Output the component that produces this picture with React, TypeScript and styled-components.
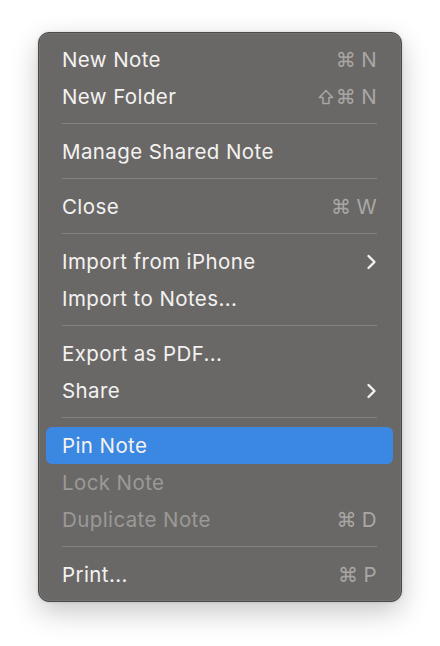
import React from "react";
import styled, { createGlobalStyle } from "styled-components";

const Global = createGlobalStyle`
  html, body { margin: 0; padding: 0; background: #ffffff; }
  body { font-family: Inter, "Noto Sans", "DejaVu Sans", sans-serif; }
`;

const Page = styled.div`
  padding: 32px 0 0 38px;
  width: 440px;
  height: 646px;
  box-sizing: border-box;
`;

const Menu = styled.div`
  width: 364px;
  box-sizing: border-box;
  background: #6a6866;
  border: 1px solid #4c4a48;
  border-radius: 11px;
  padding: 8px 8px 8px 7px;
  box-shadow: 0 10px 28px rgba(0, 0, 0, 0.22), 0 0 3px rgba(0, 0, 0, 0.15),
    inset 0 0 0 1px rgba(255, 255, 255, 0.08);
  display: flex;
  flex-direction: column;
`;

const Row = styled.div<{ $active?: boolean; $disabled?: boolean }>`
  height: 37px;
  display: flex;
  align-items: center;
  justify-content: space-between;
  padding: 0 16px;
  border-radius: 6px;
  background: ${(p) => (p.$active ? "#3b88e3" : "transparent")};
  color: ${(p) => (p.$disabled ? "#9b9997" : "#f3f2f1")};
  font-size: 20.5px;
  letter-spacing: 0.4px;
`;

const Shortcut = styled.span`
  color: #a9a7a5;
  font-size: 20.5px;
  display: flex;
  align-items: center;
  gap: 5px;
`;

const Keys = styled.span`
  display: flex;
  align-items: center;
  gap: 2px;
`;

const Glyph = styled.span`
  font-family: "DejaVu Sans", sans-serif;
  font-size: 20px;
  line-height: 1;
`;

const Separator = styled.div`
  height: 1px;
  background: #858381;
  margin: 8px 16px 9px 16px;
`;

const Chevron = () => (
  <svg width="11" height="16" viewBox="0 0 11 16">
    <path
      d="M2.5 2 L8.5 8 L2.5 14"
      fill="none"
      stroke="#f3f2f1"
      strokeWidth="2.4"
      strokeLinecap="round"
      strokeLinejoin="round"
    />
  </svg>
);

const ShiftIcon = () => (
  <svg width="16" height="16" viewBox="0 0 16 16">
    <path
      d="M8 1.6 L14.6 8.4 H11 V14.4 H5 V8.4 H1.4 Z"
      fill="none"
      stroke="#a9a7a5"
      strokeWidth="1.5"
      strokeLinejoin="round"
    />
  </svg>
);

const Cmd = ({ k, shift }: { k: string; shift?: boolean }) => (
  <Shortcut>
    <Keys>
      {shift && <ShiftIcon />}
      <Glyph>⌘</Glyph>
    </Keys>
    <span>{k}</span>
  </Shortcut>
);

export default function App() {
  return (
    <Page>
      <Global />
      <Menu>
        <Row>
          <span>New Note</span>
          <Cmd k="N" />
        </Row>
        <Row>
          <span>New Folder</span>
          <Cmd k="N" shift />
        </Row>
        <Separator />
        <Row>
          <span>Manage Shared Note</span>
        </Row>
        <Separator />
        <Row>
          <span>Close</span>
          <Cmd k="W" />
        </Row>
        <Separator />
        <Row>
          <span>Import from iPhone</span>
          <Chevron />
        </Row>
        <Row>
          <span>Import to Notes...</span>
        </Row>
        <Separator />
        <Row>
          <span>Export as PDF...</span>
        </Row>
        <Row>
          <span>Share</span>
          <Chevron />
        </Row>
        <Separator />
        <Row $active>
          <span>Pin Note</span>
        </Row>
        <Row $disabled>
          <span>Lock Note</span>
        </Row>
        <Row $disabled>
          <span>Duplicate Note</span>
          <Cmd k="D" />
        </Row>
        <Separator />
        <Row>
          <span>Print...</span>
          <Cmd k="P" />
        </Row>
      </Menu>
    </Page>
  );
}
